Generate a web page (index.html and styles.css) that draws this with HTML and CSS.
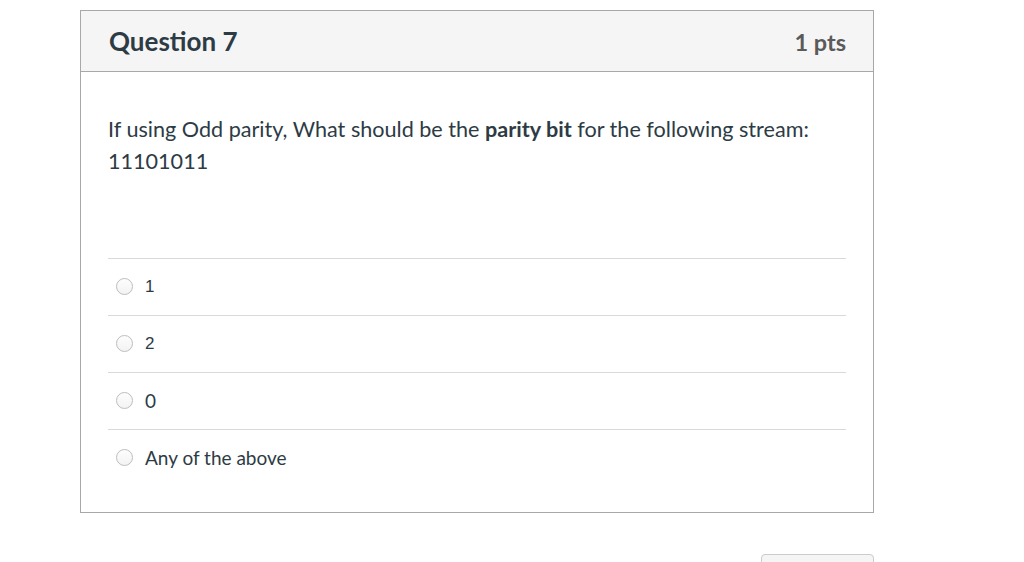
FILE: index.html
```html
<!DOCTYPE html>
<html lang="en">
<head>
<meta charset="utf-8">
<title>Question 7</title>
<link rel="stylesheet" href="styles.css">
</head>
<body>
<div class="question">
  <div class="q-header">
    <h2 class="q-title">Question 7</h2>
    <span class="q-points">1 pts</span>
  </div>
  <div class="q-body">
    <p class="q-text">If using Odd parity, What should be the <strong>parity bit</strong> for the following stream:<br>11101011</p>
    <div class="answers">
      <label class="answer"><span class="radio"></span><span class="label arial">1</span></label>
      <label class="answer"><span class="radio"></span><span class="label arial">2</span></label>
      <label class="answer"><span class="radio"></span><span class="label">0</span></label>
      <label class="answer"><span class="radio"></span><span class="label">Any of the above</span></label>
    </div>
  </div>
</div>
<div class="nav">
  <button class="btn" type="button"></button>
</div>
</body>
</html>
```
FILE: styles.css
```css
html, body {
  margin: 0;
  padding: 0;
  background: #fff;
}
body {
  font-family: Lato, "Liberation Sans", sans-serif;
  color: #2d3b45;
  padding-top: 10px;
}
.question {
  margin-left: 80px;
  width: 794px;
  box-sizing: border-box;
  border: 1px solid #a8a8a8;
}
.q-header {
  display: flex;
  justify-content: space-between;
  align-items: center;
  height: 60px;
  padding: 0 27px 0 28px;
  background: #f5f5f5;
  border-bottom: 1px solid #a8a8a8;
}
.q-title {
  margin: 0;
  font-size: 26px;
  font-weight: 700;
  color: #2d3b45;
}
.q-points {
  font-size: 23.5px;
  font-weight: 700;
  color: #5a5a5a;
  padding-top: 2px;
}
.q-body {
  padding: 41px 27px 26px 27px;
}
.q-text {
  margin: 0 0 81px 0;
  font-size: 21.6px;
  line-height: 32px;
}
.q-text strong {
  font-weight: 700;
}
.answer {
  display: flex;
  align-items: center;
  height: 56px;
  border-top: 1px solid #d9d9d9;
}
.radio {
  width: 17px;
  height: 17px;
  box-sizing: border-box;
  border: 1px solid #bdbdbd;
  border-radius: 50%;
  background: linear-gradient(#fdfdfd, #f3f3f3);
  margin-left: 8px;
  margin-right: 12px;
  margin-top: -2px;
  flex: none;
}
.label {
  font-size: 19px;
  color: #2d3b45;
  margin-top: -1px;
}
.label.arial {
  font-family: "Liberation Sans", Arial, sans-serif;
  font-size: 17px;
  margin-top: 0;
}
.nav {
  margin-left: 80px;
  width: 794px;
  display: flex;
  justify-content: flex-end;
  margin-top: 41px;
}
.btn {
  width: 113px;
  height: 38px;
  background: #f5f5f5;
  border: 1px solid #c7cdd1;
  border-radius: 4px;
  padding: 0;
}
```
